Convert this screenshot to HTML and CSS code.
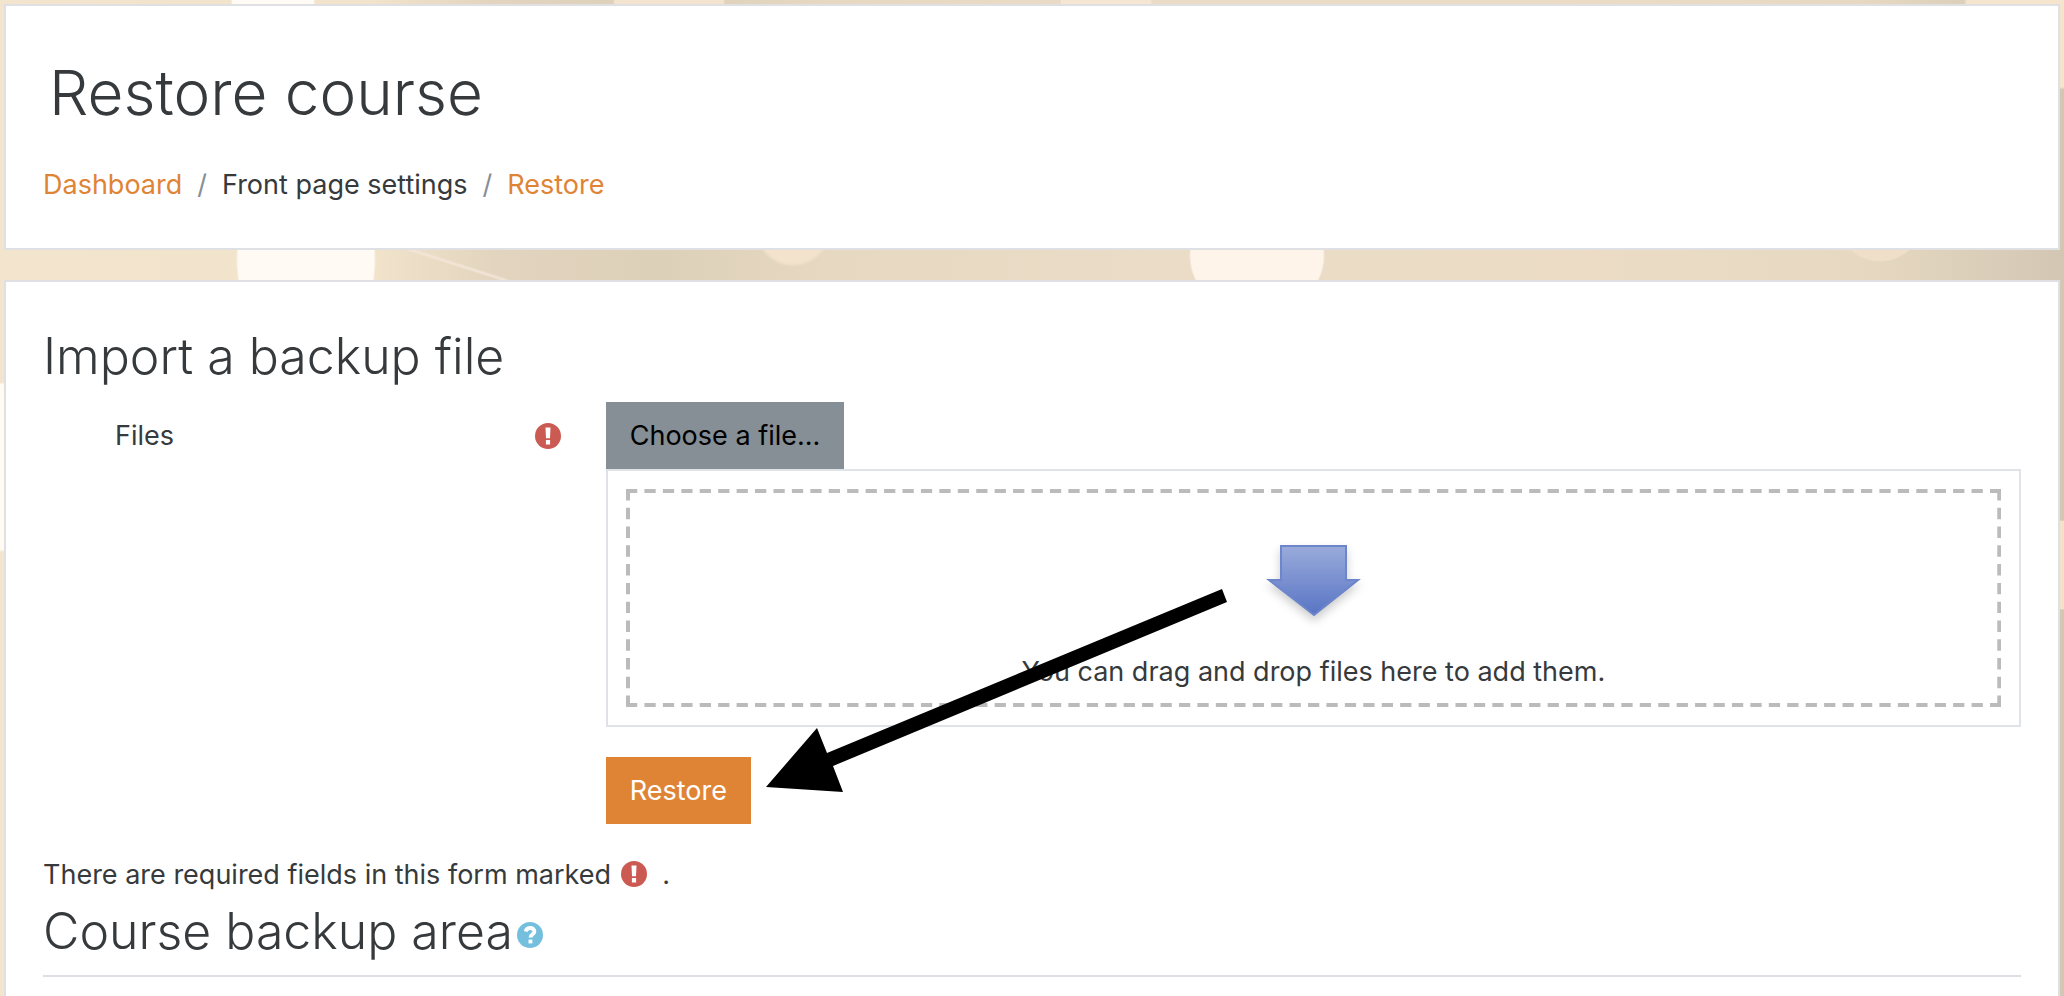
FILE: index.html
```html
<!DOCTYPE html>
<html lang="en">

<head>
    <meta charset="UTF-8">
    <title>Restore course</title>
    <meta name="viewport" content="width=device-width,initial-scale=1">
    <link rel="stylesheet" href="styles.css">
</head>

<body>
    <!-- icon sprites -->
    <svg class="sprites" aria-hidden="true">
        <symbol id="icon-required" viewBox="0 0 26 26">
            <circle cx="13" cy="13" r="13" fill="#cb5a52"/>
            <path d="M10.5 4.500h5l-.5 10.700h-4zM10.900 17h4.200v4.400h-4.200z" fill="#fff"/>
        </symbol>
        <symbol id="icon-help" viewBox="0 0 26 26">
            <circle cx="13" cy="13" r="13" fill="#75bfde"/>
            <path d="M8.600 9.600C9.300 7 10.900 6 13.200 6c2.400 0 4.200 1.500 4.200 3.500 0 2.700-3.900 2.900-3.900 6" fill="none" stroke="#fff" stroke-width="3.800"/>
            <path d="M11.500 17.600h3.900v3.800h-3.900z" fill="#fff"/>
        </symbol>
    </svg>

    <header class="card page-header">
        <h1>Restore course</h1>
        <nav aria-label="Breadcrumb">
            <ol class="breadcrumb">
                <li><a href="#">Dashboard</a></li>
                <li>Front page settings</li>
                <li><a href="#">Restore</a></li>
            </ol>
        </nav>
    </header>

    <main class="card page-content">
        <h2>Import a backup file</h2>
        <form>
            <div class="form-row">
                <div class="form-label">
                    <label for="chooseFile">Files</label>
                    <svg class="icon" role="img" aria-label="Required"><use href="#icon-required"/></svg>
                </div>
                <div class="form-field">
                    <button class="btn btn-secondary" type="button" id="chooseFile">Choose a file...</button>
                    <div class="filemanager">
                        <div class="dropzone">
                            <svg class="dashes" aria-hidden="true">
                                <line x1="0" y1="0" x2="100%" y2="0" pathLength="1343"/>
                                <line x1="0" y1="100%" x2="100%" y2="100%" pathLength="1343"/>
                                <line x1="0" y1="0" x2="0" y2="100%" pathLength="209"/>
                                <line x1="100%" y1="0" x2="100%" y2="100%" pathLength="209"/>
                            </svg>
                            <svg class="drop-arrow" viewBox="0 0 108 92" aria-hidden="true">
                                <defs>
                                    <linearGradient id="blue" x1="0" y1="0" x2="0" y2="1">
                                        <stop offset="0" stop-color="#9aabdb"/>
                                        <stop offset="1" stop-color="#5874c4"/>
                                    </linearGradient>
                                </defs>
                                <path d="M22 9h65v34h12L55 78 10 43h12z" fill="url(#blue)" stroke="#6c85cb" stroke-width="2"/>
                            </svg>
                            <p>You can drag and drop files here to add them.</p>
                        </div>
                    </div>
                    <button class="btn btn-primary" type="submit">Restore</button>
                    <svg class="pointer" viewBox="0 0 462 204" aria-hidden="true">
                        <path d="M456 1l5 13L67 178l10 26L0 199l51-59 10 25z"/>
                    </svg>
                </div>
            </div>
            <p class="form-note">There are required fields in this form marked <svg class="icon" role="img" aria-label="Required"><use href="#icon-required"/></svg> <span>.</span></p>
        </form>
        <h2 class="area-title">Course backup area<a class="help" href="#" aria-label="Help with Course backup area"><svg class="icon"><use href="#icon-help"/></svg></a></h2>
    </main>
</body>

</html>
```

FILE: styles.css
```css
* {
    box-sizing: border-box;
}

body {
    margin: 0;
    padding: 4px 4px 0;
    display: flex;
    flex-direction: column;
    gap: 30px;
    min-height: 100vh;
    overflow: hidden;
    color: #373a3c;
    font-family: Inter, "Liberation Sans", sans-serif;
    font-size: 27px;
    line-height: 40px;
    /* blurred lights behind the cards */
    background:
        radial-gradient(ellipse 70px 100px at 306px 260px, #fffaf3 97%, transparent),
        radial-gradient(ellipse 42px 60px at 273px 0, #fffaf3 97%, transparent),
        radial-gradient(ellipse 56px 60px at 669px 0, #f4e4cf 97%, transparent),
        radial-gradient(ellipse 46px 60px at 1106px 0, #f6e7d4 97%, transparent),
        radial-gradient(circle 90px at 2054px 0, #f6e5cd 97%, transparent),
        radial-gradient(circle 85px at 0 467px, #fffaf2 97%, transparent),
        radial-gradient(circle 45px at 2064px 565px, #f3e2c9 97%, transparent),
        radial-gradient(ellipse 68px 60px at 1257px 256px, #fef4ea 97%, transparent),
        radial-gradient(circle 38px at 793px 229px, #f3e3cc 90%, transparent),
        radial-gradient(circle 44px at 1880px 218px, #f0dfc8 97%, transparent),
        linear-gradient(to top right, transparent 46%, #f2e6d8 50%, transparent 54%) 408px 249px / 100px 32px no-repeat,
        linear-gradient(90deg, #f3e4cd 0, #f2e3cb 18%, #e2d4be 24%, #ddd0b9 32%, #e6d8c1 40%, #eadcc6 56%, #ecdcc6 76%, #e7d9c1 90%, #d3c7b4 100%);
}

h1,
h2,
p {
    margin: 0;
}

h1,
h2 {
    font-weight: 300;
}

a {
    color: #df8435;
    text-decoration: none;
}

.sprites {
    position: absolute;
    width: 0;
    height: 0;
}

.card {
    background: #fff;
    border: 2px solid #dfe0e3;
    padding: 37px;
}

h1 {
    padding: 10px 6px 0;
    font-size: 62px;
    line-height: 80px;
}

.breadcrumb {
    display: flex;
    flex-wrap: wrap;
    margin: 0;
    padding: 32px 0 6px;
    list-style: none;
}

.breadcrumb li + li::before {
    content: "/";
    padding: 0 15px;
    color: #868e96;
}

.page-content {
    flex: 1;
    padding-top: 42px;
}

h2 {
    font-size: 50px;
    line-height: 64px;
    margin-bottom: 14px;
}

.icon {
    width: 26px;
    height: 26px;
}

.form-row {
    display: flex;
}

.form-label {
    flex: 0 0 28.45%;
    display: flex;
    align-items: center;
    justify-content: space-between;
    height: 68px;
    padding: 0 45px 0 72px;
}

.form-field {
    flex: 1;
    position: relative;
    display: flex;
    flex-direction: column;
    align-items: flex-start;
}

.btn {
    height: 67px;
    padding: 0 24px;
    border: 0;
    font: inherit;
    cursor: pointer;
}

.btn-secondary {
    background: #868e96;
    color: #000;
}

.btn-primary {
    background: #df8435;
    color: #fff;
}

.filemanager {
    width: 100%;
    margin-bottom: 30px;
    padding: 18px;
    border: 2px solid #dfe3e8;
}

.dropzone {
    position: relative;
    display: flex;
    flex-direction: column;
    align-items: center;
    padding: 48px 4px 15px;
}

.dashes {
    position: absolute;
    inset: 0;
    width: 100%;
    height: 100%;
    stroke: #bbb;
    stroke-width: 8px;
    stroke-dasharray: 11 7;
}

.drop-arrow {
    width: 108px;
    height: 92px;
    margin-bottom: 23px;
    filter: drop-shadow(0 5px 5px #0003);
}

/* drawn over the file box, from the drop arrow to the Restore button */
.pointer {
    position: absolute;
    left: 160px;
    top: 186px;
    width: 462px;
    height: 204px;
    pointer-events: none;
}

.form-note {
    margin-top: 31px;
}

.form-note .icon {
    margin: 0 8px 0 2px;
    vertical-align: -3px;
}

.area-title {
    margin: 4px 0 0;
    padding-bottom: 12px;
    border-bottom: 2px solid #dddfe5;
}

.help .icon {
    margin-left: 4px;
    vertical-align: 1px;
}
```
